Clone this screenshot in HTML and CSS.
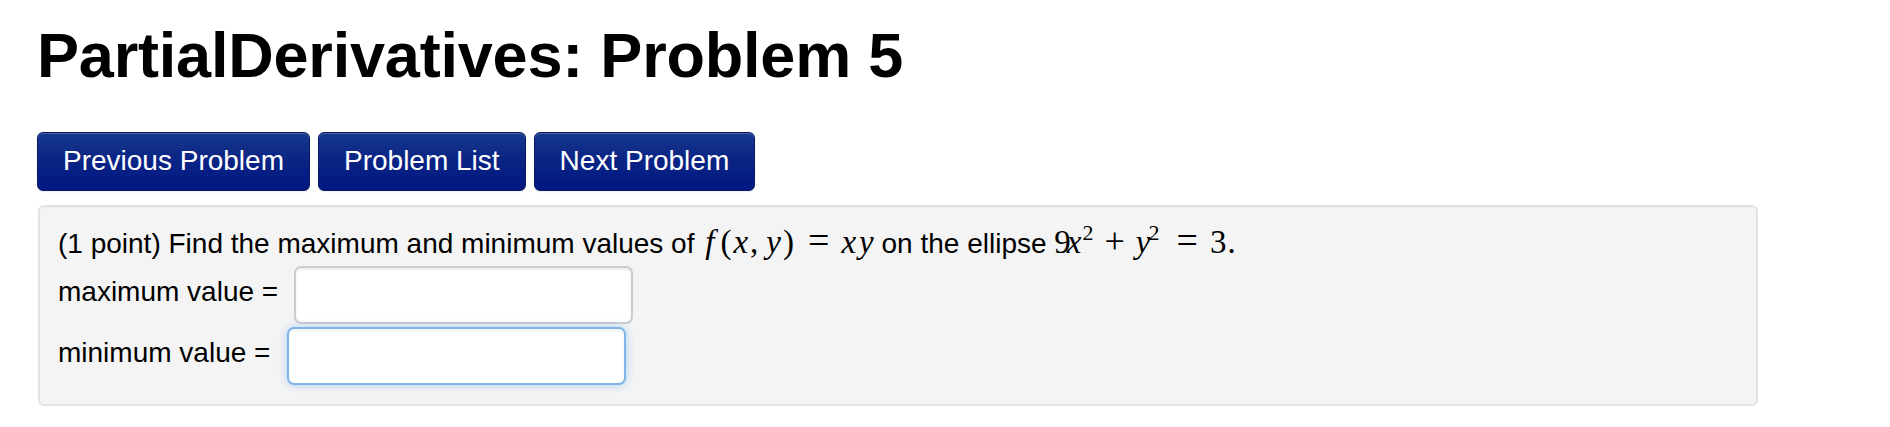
FILE: index.html
```
<!DOCTYPE html>
<html lang="en">
<head>
<meta charset="utf-8">
<title>PartialDerivatives: Problem 5</title>
<link rel="stylesheet" href="styles.css">
</head>
<body>
<div class="page">
  <h1 class="title">PartialDerivatives: Problem 5</h1>
  <div class="nav">
    <a class="btn" href="#">Previous Problem</a>
    <a class="btn" href="#">Problem List</a>
    <a class="btn" href="#">Next Problem</a>
  </div>
  <div class="well">
    <div class="problem-line">(1 point) Find the maximum and minimum values of <span class="math"><i class="mi mf">f</i><span class="mo">(</span><i class="mi">x</i><span class="mp">,</span><i class="mi">y</i><span class="mo">)</span><span class="rel">=</span><i class="mi mxy">x</i><i class="mi">y</i></span> on the ellipse <span class="math"><span class="mn nine">9</span><i class="mi mx">x</i><sup class="sup">2</sup><span class="bin">+</span><i class="mi">y</i><sup class="sup sy">2</sup><span class="rel">=</span><span class="mn">3</span><span class="dot">.</span></span></div>
    <div class="answer-row">
      <label class="answer-label" for="ans1">maximum value =</label>
      <input class="answer" id="ans1" type="text">
    </div>
    <div class="answer-row">
      <label class="answer-label" for="ans2">minimum value =</label>
      <input class="answer focused" id="ans2" type="text">
    </div>
  </div>
</div>
</body>
</html>
```
FILE: styles.css
```
html, body {
  margin: 0;
  padding: 0;
  background: #ffffff;
}

body {
  font-family: "Liberation Sans", Arial, Helvetica, sans-serif;
  color: #000000;
}

.page {
  padding: 0 0 0 37px;
  width: 1721px;
}

.title {
  margin: 0;
  padding-top: 21px;
  font-size: 63px;
  line-height: 69px;
  font-weight: bold;
  color: #000000;
  letter-spacing: -0.2px;
}

.nav {
  display: flex;
  gap: 8px;
  margin-top: 42px;
}

.btn {
  display: flex;
  align-items: center;
  box-sizing: border-box;
  height: 59px;
  padding: 0 25px 1px 25px;
  font-size: 28px;
  color: #ffffff;
  text-decoration: none;
  border: 1px solid #0a1a66;
  border-radius: 6px;
  background: linear-gradient(to bottom, #17388c 0%, #0a2585 45%, #021781 100%);
  box-shadow: inset 0 1px 0 rgba(255, 255, 255, 0.22), 0 1px 2px rgba(0, 0, 0, 0.08);
}

.well {
  margin-top: 14px;
  margin-left: 1px;
  background: #f4f4f4;
  border: 2px solid #e3e3e3;
  border-radius: 6px;
  padding: 17px 18px 18px 18px;
  box-shadow: inset 0 1px 1px rgba(0, 0, 0, 0.03);
}

.problem-line {
  font-size: 28px;
  line-height: 40px;
  height: 40px;
  white-space: nowrap;
}

.math {
  font-family: "Liberation Serif", "Times New Roman", serif;
  font-size: 33px;
  line-height: 0;
  white-space: nowrap;
}

.mi {
  font-style: italic;
}

.mf {
  margin-left: 3px;
  margin-right: 4px;
}

.mo {
  margin: 0 2px;
}

.mp {
  margin-right: 8px;
}

.math .mi + .mo,
.math .mi + .mp {
  margin-left: 2px;
}

.mxy {
  margin-right: 3px;
}

.rel {
  font-size: 38px;
  margin: 0 12px;
}

.bin {
  font-size: 36px;
  margin: 0 11px;
}

.nine {
  letter-spacing: -4px;
}

.dot {
  margin-left: 1px;
}

.mx {
  margin-right: 1px;
}

.sup {
  font-size: 22px;
  vertical-align: 13px;
  line-height: 0;
}

.sy {
  margin-left: -2px;
  margin-right: 5px;
}

.answer-row {
  display: flex;
  align-items: center;
  height: 61px;
}

.answer-label {
  font-size: 28px;
  line-height: 40px;
  padding-bottom: 6px;
  white-space: nowrap;
}

.answer {
  margin-left: 16px;
  width: 339px;
  height: 58px;
  box-sizing: border-box;
  border: 2px solid #cccccc;
  border-radius: 7px;
  background: #ffffff;
  box-shadow: inset 0 2px 3px rgba(0, 0, 0, 0.08);
  font-size: 28px;
  padding: 0 10px;
  outline: none;
}

.answer.focused {
  margin-left: 17px;
  border-color: #82b4ea;
  box-shadow: inset 0 2px 3px rgba(0, 0, 0, 0.06), 0 0 10px rgba(82, 168, 236, 0.45);
}
```
